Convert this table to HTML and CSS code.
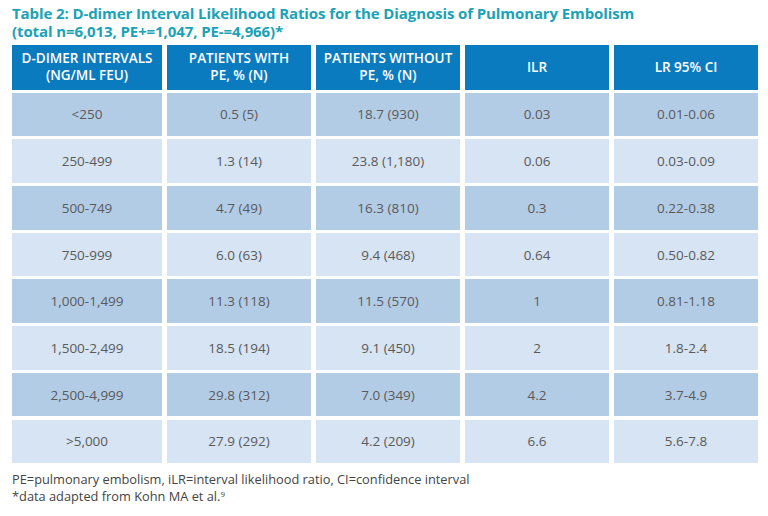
FILE: index.html
```html
<!DOCTYPE html>
<html>
<head>
<meta charset="utf-8">
<link rel="stylesheet" href="styles.css">
</head>
<body>
<div class="page">
  <h1 class="title"><span class="tline">Table 2: D-dimer Interval Likelihood Ratios for the Diagnosis of Pulmonary Embolism</span><span class="tline">(total n=6,013, PE+=1,047, PE-=4,966)*</span></h1>
  <div class="table">
    <div class="th">D-DIMER INTERVALS<br>(NG/ML FEU)</div>
    <div class="th">PATIENTS WITH<br>PE, % (N)</div>
    <div class="th">PATIENTS WITHOUT<br>PE, % (N)</div>
    <div class="th">ILR</div>
    <div class="th">LR 95% CI</div>

    <div class="td dark">&lt;250</div><div class="td dark">0.5 (5)</div><div class="td dark">18.7 (930)</div><div class="td dark">0.03</div><div class="td dark">0.01-0.06</div>
    <div class="td light">250-499</div><div class="td light">1.3 (14)</div><div class="td light">23.8 (1,180)</div><div class="td light">0.06</div><div class="td light">0.03-0.09</div>
    <div class="td dark">500-749</div><div class="td dark">4.7 (49)</div><div class="td dark">16.3 (810)</div><div class="td dark">0.3</div><div class="td dark">0.22-0.38</div>
    <div class="td light">750-999</div><div class="td light">6.0 (63)</div><div class="td light">9.4 (468)</div><div class="td light">0.64</div><div class="td light">0.50-0.82</div>
    <div class="td dark">1,000-1,499</div><div class="td dark">11.3 (118)</div><div class="td dark">11.5 (570)</div><div class="td dark">1</div><div class="td dark">0.81-1.18</div>
    <div class="td light">1,500-2,499</div><div class="td light">18.5 (194)</div><div class="td light">9.1 (450)</div><div class="td light">2</div><div class="td light">1.8-2.4</div>
    <div class="td dark">2,500-4,999</div><div class="td dark">29.8 (312)</div><div class="td dark">7.0 (349)</div><div class="td dark">4.2</div><div class="td dark">3.7-4.9</div>
    <div class="td light">&gt;5,000</div><div class="td light">27.9 (292)</div><div class="td light">4.2 (209)</div><div class="td light">6.6</div><div class="td light">5.6-7.8</div>
  </div>
  <div class="notes">
    <p>PE=pulmonary embolism, iLR=interval likelihood ratio, CI=confidence interval</p>
    <p>*data adapted from Kohn MA et al.<sup>9</sup></p>
  </div>
</div>
</body>
</html>
```
FILE: styles.css
```css
html, body {
  margin: 0;
  padding: 0;
  background: #ffffff;
}
.page {
  width: 768px;
  height: 516px;
  box-sizing: border-box;
  padding: 4px 10px 0 12px;
  font-family: "Open Sans", Lato, sans-serif;
  color: #555555;
}
.title {
  margin: 0;
  font-size: 15px;
  line-height: 18px;
  font-weight: 700;
  letter-spacing: -0.1px;
  color: #1aa2b7;
  display: flex;
  flex-direction: column;
}
.tline {
  display: block;
  height: 18px;
}
.table {
  margin-top: 5px;
  display: grid;
  grid-template-columns: 150px repeat(4, 1fr);
  grid-template-rows: 44.5px;
  grid-auto-rows: 43.5px;
  column-gap: 5px;
  row-gap: 3.2px;
}
.th {
  background: #0b7bc0;
  color: #ffffff;
  font-size: 13.5px;
  line-height: 17px;
  font-weight: 600;
  display: flex;
  align-items: center;
  justify-content: center;
  text-align: center;
}
.td {
  font-size: 13.5px;
  display: flex;
  align-items: center;
  justify-content: center;
  color: #5a5a5a;
}
.dark { background: #b3cce6; }
.light { background: #d6e4f3; }
.notes {
  margin-top: 8px;
  font-size: 12.8px;
  line-height: 17px;
  color: #444444;
}
.notes p { margin: 0; }
.notes sup {
  font-size: 8px;
  vertical-align: 4px;
  line-height: 0;
}
```
